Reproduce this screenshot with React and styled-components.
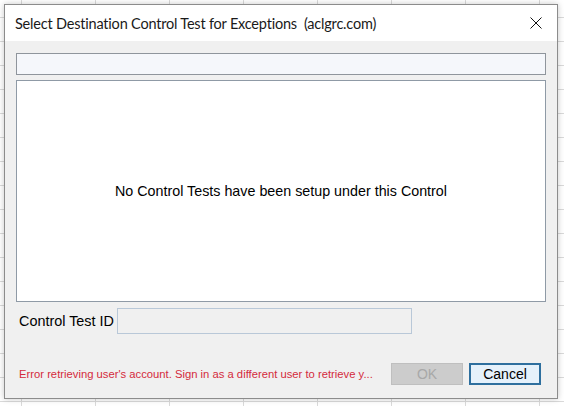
import React from 'react';
import styled, { createGlobalStyle } from 'styled-components';

const GlobalStyle = createGlobalStyle`
  html, body {
    margin: 0;
    padding: 0;
  }
  body {
    width: 564px;
    height: 406px;
    overflow: hidden;
    background-color: #ffffff;
    background-image:
      linear-gradient(to right, #dadada 1px, transparent 1px),
      linear-gradient(to bottom, #dadada 1px, transparent 1px);
    background-size: 74px 24px;
    background-position: 21px 17px;
    font-family: "Liberation Sans", Arial, sans-serif;
  }
`;

// Outer page holding the dialog over the spreadsheet grid
const Page = styled.div`
  padding: 4px 0 0 4px;
`;

const Dialog = styled.div`
  width: 552px;
  height: 393px;
  border: 1px solid #8c8c8c;
  background: #f0f0f0;
  box-shadow: 0 0 6px rgba(0, 0, 0, 0.22);
  display: flex;
  flex-direction: column;
`;

const TitleBar = styled.div`
  height: 36px;
  background: #ffffff;
  display: flex;
  align-items: center;
  justify-content: space-between;
  padding: 0 14px 0 10px;
`;

const Title = styled.span`
  font-family: Lato, "Noto Sans", sans-serif;
  font-size: 14.5px;
  letter-spacing: -0.2px;
  color: #1a1a1a;
  white-space: pre;
`;

const CloseButton = styled.div`
  width: 14px;
  height: 14px;
  display: flex;
  align-items: center;
  justify-content: center;
`;

const Body = styled.div`
  flex: 1;
  display: flex;
  flex-direction: column;
  padding: 12px 11px 13px;
`;

const SearchBox = styled.div`
  height: 20px;
  border: 1px solid #8f959c;
  background: #f5f7fb;
`;

const ListBox = styled.div`
  height: 220px;
  margin-top: 5px;
  border: 1px solid #8f9aa6;
  background: #ffffff;
  display: flex;
  align-items: center;
  justify-content: center;
  font-size: 14.3px;
  color: #000;
`;

const FieldRow = styled.div`
  height: 26px;
  margin-top: 6px;
  display: flex;
  align-items: center;
`;

const Label = styled.span`
  width: 98px;
  padding-left: 3px;
  font-size: 14.4px;
  color: #000;
`;

const IdInput = styled.div`
  width: 293px;
  height: 24px;
  border: 1px solid #b9c8d8;
  background: #f0f0f0;
`;

const Footer = styled.div`
  margin-top: auto;
  height: 22px;
  display: flex;
  align-items: center;
  padding: 0 5px 0 3px;
`;

const ErrorText = styled.span`
  flex: 1;
  font-size: 11.25px;
  color: #d42a3c;
  white-space: nowrap;
`;

const Button = styled.div`
  box-sizing: border-box;
  width: 72px;
  height: 22px;
  margin-left: ${(p) => (p.first ? '0' : '6px')};
  display: flex;
  align-items: center;
  justify-content: center;
  font-size: 14px;
  border: ${(p) => (p.disabled ? '1px solid #bfbfbf' : '2px solid #2e6f9e')};
  background: ${(p) => (p.disabled ? '#cccccc' : '#e5f1fb')};
  color: ${(p) => (p.disabled ? '#a8a8a8' : '#000')};
`;

const App = () => (
  <>
    <GlobalStyle />
    <Page>
      <Dialog>
        <TitleBar>
          <Title>Select Destination Control Test for Exceptions  (aclgrc.com)</Title>
          <CloseButton>
            <svg width="12" height="12" viewBox="0 0 12 12">
              <path d="M0.5 0.5 L11.5 11.5 M11.5 0.5 L0.5 11.5" stroke="#111" strokeWidth="1" fill="none" />
            </svg>
          </CloseButton>
        </TitleBar>

        <Body>
          <SearchBox />
          <ListBox>No Control Tests have been setup under this Control</ListBox>

          <FieldRow>
            <Label>Control Test ID</Label>
            <IdInput />
          </FieldRow>

          <Footer>
            <ErrorText>Error retrieving user's account. Sign in as a different user to retrieve y...</ErrorText>
            <Button first disabled>OK</Button>
            <Button>Cancel</Button>
          </Footer>
        </Body>
      </Dialog>
    </Page>
  </>
);

export default App;
